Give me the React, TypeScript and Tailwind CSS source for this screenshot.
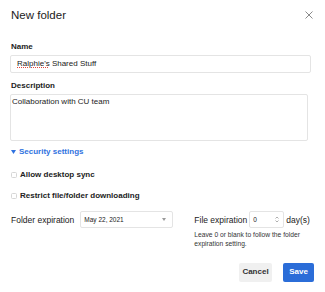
import React from "react";

const CloseIcon = () => (
  <svg width="8" height="8" viewBox="0 0 8 8" className="text-[#8a8a8a]">
    <path d="M0.5 0.5 L7.5 7.5 M7.5 0.5 L0.5 7.5" stroke="currentColor" strokeWidth="1" />
  </svg>
);

const Check = ({ label }: { label: string }) => (
  <label className="flex items-center h-[10px] ml-px">
    <span className="w-[6px] h-[6px] border border-[#d6d6d6] rounded-[1.5px] bg-white" />
    <span className="ml-[3px] text-[8px] leading-[10px] font-semibold text-[#222]">{label}</span>
  </label>
);

export default function App() {
  return (
    <div className="w-[325px] h-[292px] bg-white px-[10px] pt-[8px] font-['Liberation_Sans',Arial,sans-serif] text-[#222]">
      <div className="flex items-center justify-between h-[14px]">
        <h2 className="ml-px text-[11.5px] leading-[14px] text-[#222]">New folder</h2>
        <span className="mr-[2px] flex">
          <CloseIcon />
        </span>
      </div>

      <div className="mt-[20px] ml-px text-[8px] leading-[10px] font-semibold">Name</div>
      <div className="mt-[3px] w-[301px] h-[18px] border border-[#e4e4e4] rounded-[2px] pl-[6px] flex items-center text-[8px] leading-[10px]">
        <span className="underline decoration-dotted decoration-[#e0463c] underline-offset-[1px]">Ralphie's</span>
        <span>&nbsp;Shared Stuff</span>
      </div>

      <div className="mt-[8px] ml-px text-[8px] leading-[10px] font-semibold">Description</div>
      <div className="mt-[3px] w-[298px] h-[47px] border border-[#e4e4e4] rounded-[2px] pl-px pt-[2px] text-[8px] leading-[10px]">
        Collaboration with CU team
      </div>

      <div className="mt-[6px] ml-px flex items-center h-[10px] text-[#2f72e0]">
        <svg width="5" height="4" viewBox="0 0 5 4">
          <path d="M0 0 H5 L2.5 4 Z" fill="currentColor" />
        </svg>
        <span className="ml-[3px] text-[8px] leading-[10px] font-semibold">Security settings</span>
      </div>

      <div className="mt-[13px]">
        <Check label="Allow desktop sync" />
      </div>
      <div className="mt-[11px]">
        <Check label="Restrict file/folder downloading" />
      </div>

      <div className="mt-[10px] flex items-start">
        <div className="flex items-center h-[17px]">
          <span className="ml-px text-[8.5px] leading-[10px]">Folder expiration</span>
          <div className="ml-[6px] w-[93px] h-[17px] border border-[#e4e4e4] rounded-[2px] flex items-center justify-between pl-[3px] pr-[6px]">
            <span className="text-[6.5px] leading-[8px]">May 22, 2021</span>
            <svg width="4" height="3" viewBox="0 0 4 3" className="text-[#9a9a9a]">
              <path d="M0 0 H4 L2 3 Z" fill="currentColor" />
            </svg>
          </div>
        </div>
        <div className="ml-[21px] flex flex-col">
          <div className="flex items-center h-[17px]">
            <span className="text-[8.5px] leading-[10px]">File expiration</span>
            <div className="ml-[2px] w-[35px] h-[17px] border border-[#e4e4e4] rounded-[2px] flex items-center justify-between pl-[3px] pr-[4px]">
              <span className="text-[6.5px] leading-[8px]">0</span>
              <svg width="4" height="7" viewBox="0 0 4 7" className="text-[#9a9a9a]">
                <path d="M0.5 2.5 L2 1 L3.5 2.5 M0.5 4.5 L2 6 L3.5 4.5" stroke="currentColor" strokeWidth="0.8" fill="none" />
              </svg>
            </div>
            <span className="ml-[2px] text-[8.5px] leading-[10px]">day(s)</span>
          </div>
          <p className="mt-[1.5px] text-[6.7px] leading-[9px] text-[#333]">
            Leave 0 or blank to follow the folder
            <br />
            expiration setting.
          </p>
        </div>
      </div>

      <div className="mt-[15px] flex justify-end gap-[11px] pr-px">
        <button className="w-[33px] h-[19px] rounded-[2px] bg-[#f0f0f0] text-[8px] font-semibold text-[#333]">
          Cancel
        </button>
        <button className="w-[31px] h-[19px] rounded-[2px] bg-[#2b6dd8] text-[8px] font-bold text-white">
          Save
        </button>
      </div>
    </div>
  );
}
